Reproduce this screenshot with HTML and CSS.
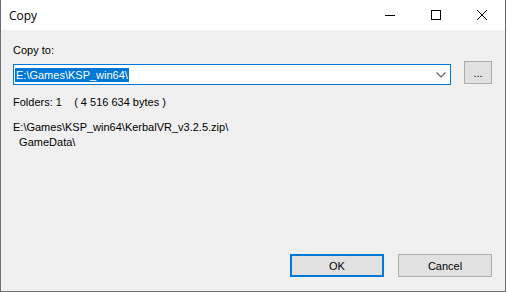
FILE: index.html
```html
<!DOCTYPE html>
<html lang="en">
<head>
  <meta charset="UTF-8">
  <title>Copy</title>
  <link rel="stylesheet" href="styles.css">
</head>
<body>

  <div class="window">
    <div class="titlebar">
      <span class="title">Copy</span>
      <div class="caption-buttons">
        <span class="caption-btn">
          <svg width="10" height="10" viewBox="0 0 10 10"><path d="M0 5.5h10" stroke="#000" stroke-width="1"/></svg>
        </span>
        <span class="caption-btn">
          <svg width="10" height="10" viewBox="0 0 10 10"><rect x="0.5" y="0.5" width="9" height="9" fill="none" stroke="#000" stroke-width="1"/></svg>
        </span>
        <span class="caption-btn">
          <svg width="10" height="10" viewBox="0 0 10 10"><path d="M0 0L10 10M10 0L0 10" stroke="#000" stroke-width="1"/></svg>
        </span>
      </div>
    </div>

    <div class="content">
      <p class="label">Copy to:</p>

      <div class="target-row">
        <div class="combo">
          <span class="combo-text">E:\Games\KSP_win64\</span>
          <svg class="chevron" width="10" height="6" viewBox="0 0 10 6"><path d="M0.5 0.5L5 5L9.5 0.5" fill="none" stroke="#606060" stroke-width="1.1"/></svg>
        </div>
        <button class="btn browse">...</button>
      </div>

      <p class="folders">Folders: 1    ( 4 516 634 bytes )</p>

      <p class="source">E:\Games\KSP_win64\KerbalVR_v3.2.5.zip\
  GameData\</p>

      <div class="actions">
        <button class="btn primary">OK</button>
        <button class="btn">Cancel</button>
      </div>
    </div>
  </div>

</body>
</html>
```

FILE: styles.css
```css
html, body {
  margin: 0;
  background: #f0f0f0;
}

body {
  font-family: "Liberation Sans", Arial, sans-serif;
  font-size: 11px;
  color: #000;
}

.window {
  width: 506px;
  height: 292px;
  box-sizing: border-box;
  border: 1px solid #6d6d6d;
  border-top: none;
  display: flex;
  flex-direction: column;
  background: #f0f0f0;
}

.titlebar {
  height: 30px;
  background: #fff;
  display: flex;
  align-items: center;
  justify-content: space-between;
  flex-shrink: 0;
}

.title {
  font-family: "Open Sans", "Noto Sans", sans-serif;
  font-size: 12px;
  padding-left: 8px;
}

.caption-buttons {
  display: flex;
  height: 100%;
}

.caption-btn {
  width: 46px;
  height: 30px;
  display: flex;
  align-items: center;
  justify-content: center;
}

.content {
  flex: 1;
  display: flex;
  flex-direction: column;
  padding: 14px 13px 14px 12px;
}

p {
  margin: 0;
  line-height: 13px;
}

.target-row {
  display: flex;
  align-items: flex-start;
  gap: 13px;
  margin-top: 4px;
}

.combo {
  flex: 1;
  height: 21px;
  margin-top: 3px;
  box-sizing: border-box;
  border: 1px solid #0078d7;
  background: #fff;
  display: flex;
  align-items: center;
  justify-content: space-between;
  padding: 0 4px 0 1px;
}

.combo-text {
  background: #0078d7;
  color: #fff;
  line-height: 14px;
  padding: 0 1px;
}

.btn {
  font-family: "Liberation Sans", Arial, sans-serif;
  font-size: 11px;
  color: #000;
  background: #e1e1e1;
  border: 1px solid #adadad;
  margin: 0;
  padding: 0;
  height: 23px;
  width: 94px;
  box-sizing: border-box;
}

.browse {
  width: 28px;
}

.folders {
  margin-top: 11px;
  white-space: pre;
}

.source {
  margin-top: 11px;
  white-space: pre;
  line-height: 15px;
}

.actions {
  margin-top: auto;
  display: flex;
  justify-content: flex-end;
  gap: 14px;
}

.btn.primary {
  border: 2px solid #0078d7;
}
```
